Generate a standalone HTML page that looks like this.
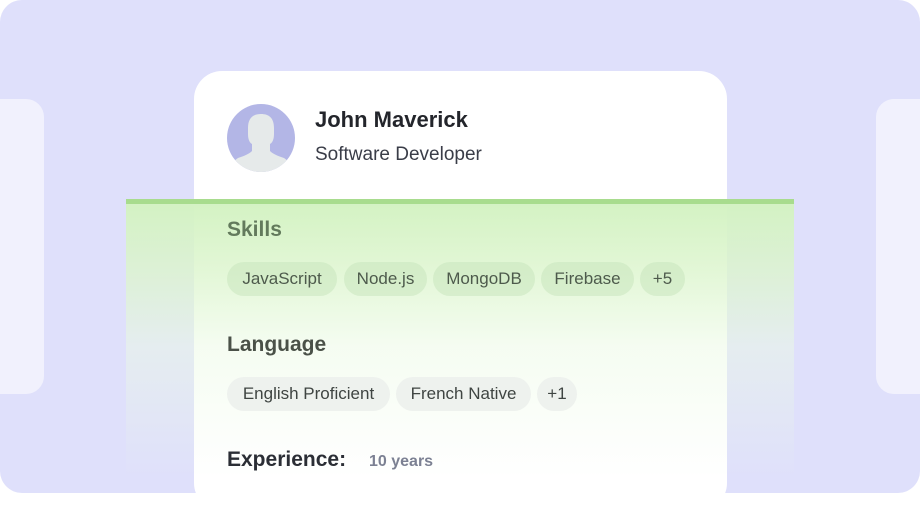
<!DOCTYPE html>
<html><head><meta charset="utf-8"><style>
*{margin:0;padding:0;box-sizing:border-box}
body{width:920px;height:493px;background:#fff;position:relative;overflow:hidden;font-family:"Liberation Sans",sans-serif}
.bg{position:absolute;left:0;top:0;width:920px;height:493px;border-radius:22px;background:#dfe0fb}
.side{position:absolute;top:99px;width:44px;height:295px;background:#f1f1fd}
.card{position:absolute;left:194px;top:71px;width:533px;height:440px;background:#fff;border-radius:28px}
.av{position:absolute;left:227px;top:104px;width:68px;height:68px;border-radius:50%;background:#b3b6e6;overflow:hidden}
.ov{position:absolute;left:126px;top:199px;width:668px;height:294px;background:linear-gradient(#d3f2c2 0%,rgba(220,245,205,.8) 25%,rgba(235,250,228,.5) 50%,rgba(255,255,255,0) 95%)}
.ov .ln{position:absolute;left:0;top:0;width:100%;height:5px;background:#a8dc8e}
.t{position:absolute;white-space:nowrap}
.chip{position:absolute;height:34px;border-radius:17px;line-height:34px;text-align:center;font-size:17px;color:#4d5a4c}
.h{font-weight:bold;font-size:21px}
</style></head><body>
<div class="bg"></div>
<div class="side" style="left:0;border-radius:0 18px 18px 0"></div>
<div class="side" style="left:876px;border-radius:18px 0 0 18px"></div>
<div class="card"></div>
<div class="av"><svg width="68" height="68" viewBox="0 0 68 68"><path d="M21 24c0-10 5-14 13-14s13 4 13 14v6c0 6-2 9-4 10v7c3 3 8 5 14 7c3 2 5 4 6 7v9H5v-9c1-3 3-5 6-7c6-2 11-4 14-7v-7c-2-1-4-4-4-10z" fill="#e6eaea"/></svg></div>
<div class="t" style="left:315px;top:107px;font-size:22px;font-weight:bold;color:#23252b">John Maverick</div>
<div class="t" style="left:315px;top:144px;font-size:19px;color:#3a3d48">Software Developer</div>
<div class="ov"><div class="ln"></div></div>
<div class="t h" style="left:227px;top:218px;color:#637a5c">Skills</div>
<div class="chip" style="left:227px;top:262px;width:110px;background:rgba(200,230,190,.55)">JavaScript</div>
<div class="chip" style="left:344px;top:262px;width:83px;background:rgba(200,230,190,.55)">Node.js</div>
<div class="chip" style="left:433px;top:262px;width:102px;background:rgba(200,230,190,.55)">MongoDB</div>
<div class="chip" style="left:541px;top:262px;width:93px;background:rgba(200,230,190,.55)">Firebase</div>
<div class="chip" style="left:640px;top:262px;width:45px;background:rgba(200,230,190,.55)">+5</div>
<div class="t h" style="left:227px;top:333px;color:#4a5148">Language</div>
<div class="chip" style="left:227px;top:377px;width:163px;background:#eef2ee;color:#3f4542">English Proficient</div>
<div class="chip" style="left:396px;top:377px;width:135px;background:#eef2ee;color:#3f4542">French Native</div>
<div class="chip" style="left:537px;top:377px;width:40px;background:#eef2ee;color:#3f4542">+1</div>
<div class="t h" style="left:227px;top:448px;color:#2b2e35">Experience:</div>
<div class="t" style="left:369px;top:453px;font-size:16px;font-weight:bold;color:#7c8193">10 years</div>
</body></html>
